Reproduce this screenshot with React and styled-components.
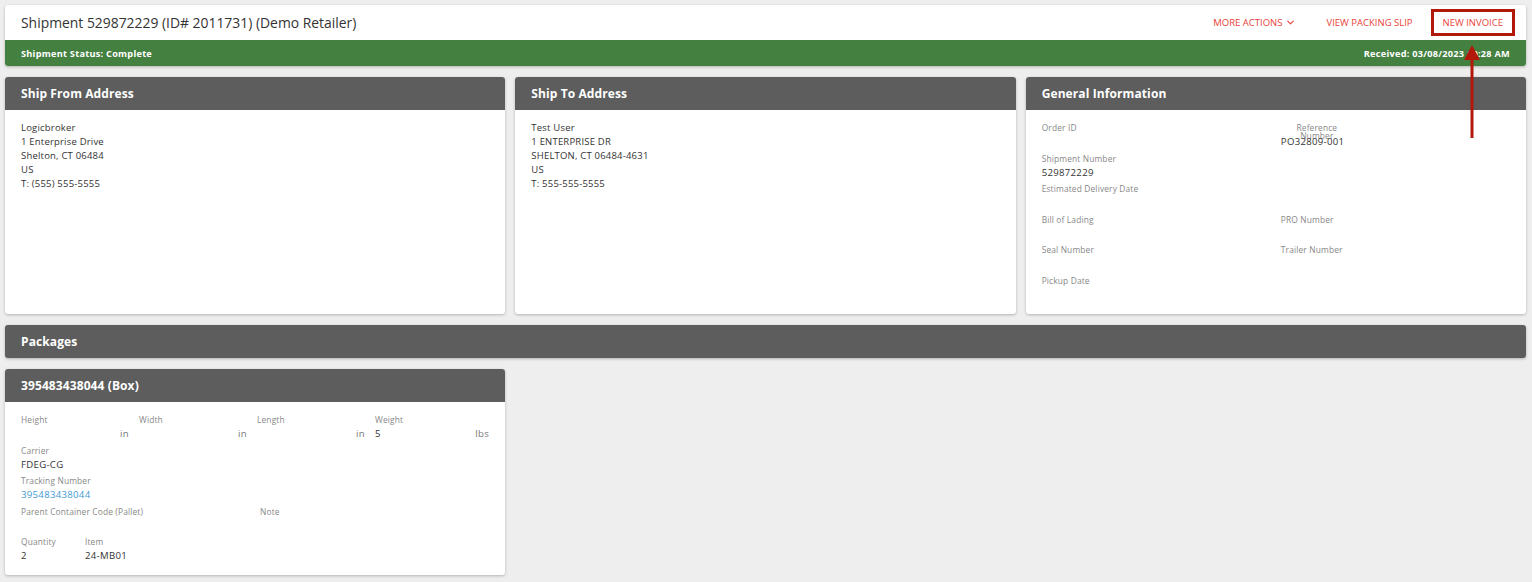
import React from "react";
import styled, { createGlobalStyle } from "styled-components";
import { ChevronDown } from "lucide-react";

const Global = createGlobalStyle`
  html, body { margin: 0; padding: 0; background: #eeeeee; }
  body { font-family: "Open Sans", "Noto Sans", sans-serif; color: #333; }
  * { box-sizing: border-box; }
`;

const Page = styled.div`
  position: relative;
  padding: 5px 6px 5px 5px;
  display: flex;
  flex-direction: column;
  gap: 11px;
`;

const HeaderCard = styled.div`
  background: #fff;
  border-radius: 3px;
  box-shadow: 0 1px 3px rgba(0,0,0,0.25);
  overflow: hidden;
`;

const TitleRow = styled.div`
  height: 35px;
  display: flex;
  align-items: center;
  justify-content: space-between;
  padding: 0 11px 0 16px;
`;

const Title = styled.h1`
  margin: 0;
  font-size: 13.9px;
  font-weight: 400;
  color: #333;
`;

const Actions = styled.div`
  display: flex;
  align-items: center;
  gap: 6px;
`;

const ActionButton = styled.button`
  height: 27px;
  display: inline-flex;
  align-items: center;
  gap: 3px;
  padding: 0 9px;
  background: none;
  border: 3px solid ${(p) => (p.$highlight ? "#b3190b" : "transparent")};
  color: #e8433a;
  font-family: inherit;
  font-size: 9.5px;
  text-transform: uppercase;
  cursor: pointer;
`;

const StatusBar = styled.div`
  height: 26px;
  background: #44803f;
  color: #fff;
  display: flex;
  align-items: center;
  justify-content: space-between;
  padding: 0 16px;
  font-size: 9.2px;
  letter-spacing: 0.25px;
  font-weight: 700;
`;

const CardGrid = styled.div`
  display: grid;
  grid-template-columns: repeat(3, 1fr);
  gap: 10px;
`;

const Card = styled.section`
  background: #fff;
  border-radius: 3px;
  box-shadow: 0 1px 3px rgba(0,0,0,0.25);
  overflow: hidden;
  height: ${(p) => p.$height || "auto"};
  width: ${(p) => p.$width || "auto"};
  display: flex;
  flex-direction: column;
`;

const CardHeader = styled.div`
  height: 33px;
  flex: none;
  background: #5d5d5d;
  color: #fff;
  display: flex;
  align-items: center;
  padding: 0 16px;
  font-size: 12px;
  letter-spacing: 0.1px;
  font-weight: 700;
`;

const CardBody = styled.div`
  padding: 11px 16px 14px;
  font-size: 9.5px;
  color: #333;
`;

const AddressLine = styled.div`
  line-height: 14px;
  letter-spacing: 0.2px;
`;

const TwoCol = styled.div`
  display: grid;
  grid-template-columns: ${(p) => p.$cols || "1fr 1fr"};
  column-gap: 10px;
`;

const Field = styled.div`
  height: 30.5px;
  min-width: 0;
`;

const Label = styled.div`
  height: 13px;
  font-size: 8.4px;
  letter-spacing: 0.15px;
  color: #888;
  line-height: ${(p) => (p.$narrow ? "8px" : "13px")};
  padding-top: ${(p) => (p.$narrow ? "3px" : "0")};
  width: ${(p) => (p.$narrow ? "56px" : "auto")};
  margin-left: ${(p) => (p.$narrow ? "8px" : "0")};
  text-align: ${(p) => (p.$narrow ? "center" : "left")};
  white-space: ${(p) => (p.$narrow ? "normal" : "nowrap")};
`;

const Value = styled.div`
  height: 15px;
  line-height: 15px;
  font-size: 9.6px;
  letter-spacing: 0.3px;
  color: ${(p) => (p.$link ? "#3f9ad3" : "#333")};
  display: flex;
  justify-content: space-between;
`;

const Unit = styled.span`
  color: #777;
`;

const DimGrid = styled.div`
  display: grid;
  grid-template-columns: 108px 108px 108px 1fr;
  column-gap: 10px;
`;

const SectionBar = styled.div`
  height: 33px;
  background: #5d5d5d;
  color: #fff;
  border-radius: 3px;
  box-shadow: 0 1px 3px rgba(0,0,0,0.25);
  display: flex;
  align-items: center;
  padding: 0 16px;
  font-size: 12px;
  letter-spacing: 0.1px;
  font-weight: 700;
`;

const Arrow = styled.svg`
  position: absolute;
  left: 1462px;
  top: 44px;
  pointer-events: none;
`;

const fields = [
  ["Order ID", "", "Reference Number", "PO32809-001", true],
  ["Shipment Number", "529872229", null],
  ["Estimated Delivery Date", "", null],
  ["Bill of Lading", "", "PRO Number", ""],
  ["Seal Number", "", "Trailer Number", ""],
  ["Pickup Date", "", null],
];

export default function App() {
  return (
    <>
      <Global />
      <Page>
        <HeaderCard>
          <TitleRow>
            <Title>Shipment 529872229 (ID# 2011731) (Demo Retailer)</Title>
            <Actions>
              <ActionButton>
                More Actions <ChevronDown size={11} strokeWidth={2.5} />
              </ActionButton>
              <ActionButton>View Packing Slip</ActionButton>
              <ActionButton $highlight>New Invoice</ActionButton>
            </Actions>
          </TitleRow>
          <StatusBar>
            <span>Shipment Status: Complete</span>
            <span>Received: 03/08/2023 10:28 AM</span>
          </StatusBar>
        </HeaderCard>

        <CardGrid>
          <Card $height="237px">
            <CardHeader>Ship From Address</CardHeader>
            <CardBody>
              <AddressLine>Logicbroker</AddressLine>
              <AddressLine>1 Enterprise Drive</AddressLine>
              <AddressLine>Shelton, CT 06484</AddressLine>
              <AddressLine>US</AddressLine>
              <AddressLine>T: (555) 555-5555</AddressLine>
            </CardBody>
          </Card>
          <Card $height="237px">
            <CardHeader>Ship To Address</CardHeader>
            <CardBody>
              <AddressLine>Test User</AddressLine>
              <AddressLine>1 ENTERPRISE DR</AddressLine>
              <AddressLine>SHELTON, CT 06484-4631</AddressLine>
              <AddressLine>US</AddressLine>
              <AddressLine>T: 555-555-5555</AddressLine>
            </CardBody>
          </Card>
          <Card $height="237px">
            <CardHeader>General Information</CardHeader>
            <CardBody>
              <TwoCol>
                {fields.map(([l1, v1, l2, v2, narrow]) => (
                  <React.Fragment key={l1}>
                    <Field>
                      <Label>{l1}</Label>
                      <Value>{v1}</Value>
                    </Field>
                    <Field>
                      {l2 && (
                        <>
                          <Label $narrow={narrow}>{l2}</Label>
                          <Value>{v2}</Value>
                        </>
                      )}
                    </Field>
                  </React.Fragment>
                ))}
              </TwoCol>
            </CardBody>
          </Card>
        </CardGrid>

        <SectionBar>Packages</SectionBar>

        <Card $width="500px" $height="206px">
          <CardHeader>395483438044 (Box)</CardHeader>
          <CardBody>
            <DimGrid>
              {[["Height", "", "in"], ["Width", "", "in"], ["Length", "", "in"], ["Weight", "5", "lbs"]].map(
                ([l, v, u]) => (
                  <Field key={l}>
                    <Label>{l}</Label>
                    <Value>
                      <span>{v}</span>
                      <Unit>{u}</Unit>
                    </Value>
                  </Field>
                )
              )}
            </DimGrid>
            <Field>
              <Label>Carrier</Label>
              <Value>FDEG-CG</Value>
            </Field>
            <Field>
              <Label>Tracking Number</Label>
              <Value $link>395483438044</Value>
            </Field>
            <TwoCol>
              <Field>
                <Label>Parent Container Code (Pallet)</Label>
                <Value />
              </Field>
              <Field>
                <Label>Note</Label>
                <Value />
              </Field>
            </TwoCol>
            <TwoCol $cols="54px 1fr">
              <Field>
                <Label>Quantity</Label>
                <Value>2</Value>
              </Field>
              <Field>
                <Label>Item</Label>
                <Value>24-MB01</Value>
              </Field>
            </TwoCol>
          </CardBody>
        </Card>

        <Arrow width="20" height="96" viewBox="0 0 20 96">
          <line x1="10" y1="12" x2="10" y2="94" stroke="#b3190b" strokeWidth="3" />
          <polygon points="10,1 18,16 2,16" fill="#b3190b" />
        </Arrow>
      </Page>
    </>
  );
}
